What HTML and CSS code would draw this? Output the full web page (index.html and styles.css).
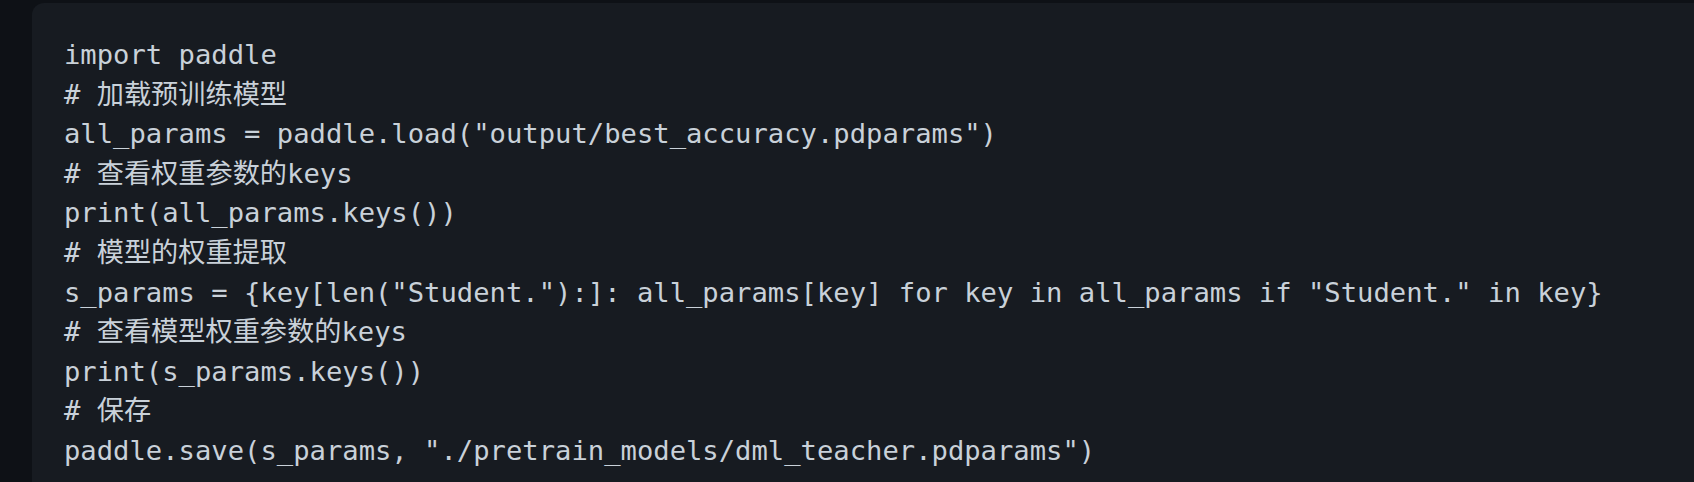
FILE: index.html
```html
<!DOCTYPE html>
<html lang="zh">
<head>
<meta charset="utf-8">
<link rel="stylesheet" href="styles.css">
</head>
<body>
<div class="page">
<pre class="code"><code>import paddle
# 加载预训练模型
all_params = paddle.load("output/best_accuracy.pdparams")
# 查看权重参数的keys
print(all_params.keys())
# 模型的权重提取
s_params = {key[len("Student."):]: all_params[key] for key in all_params if "Student." in key}
# 查看模型权重参数的keys
print(s_params.keys())
# 保存
paddle.save(s_params, "./pretrain_models/dml_teacher.pdparams")</code></pre>
</div>
</body>
</html>
```
FILE: styles.css
```css
html, body {
  margin: 0;
  padding: 0;
  background: #0e1116;
  height: 100%;
}
.page {
  box-sizing: border-box;
  height: 482px;
  padding: 3px 0 0 32px;
  display: flex;
}
.code {
  flex: 1;
  margin: 0;
  box-sizing: border-box;
  padding: 32px 0 0 32px;
  background: #171b21;
  border-radius: 12px 0 0 0;
  color: #c9d1d9;
  font-family: "DejaVu Sans Mono", "Noto Sans CJK SC", monospace;
  font-size: 27.2px;
  line-height: 39.6px;
  white-space: pre;
  overflow: hidden;
}
.code code {
  font: inherit;
}
```
